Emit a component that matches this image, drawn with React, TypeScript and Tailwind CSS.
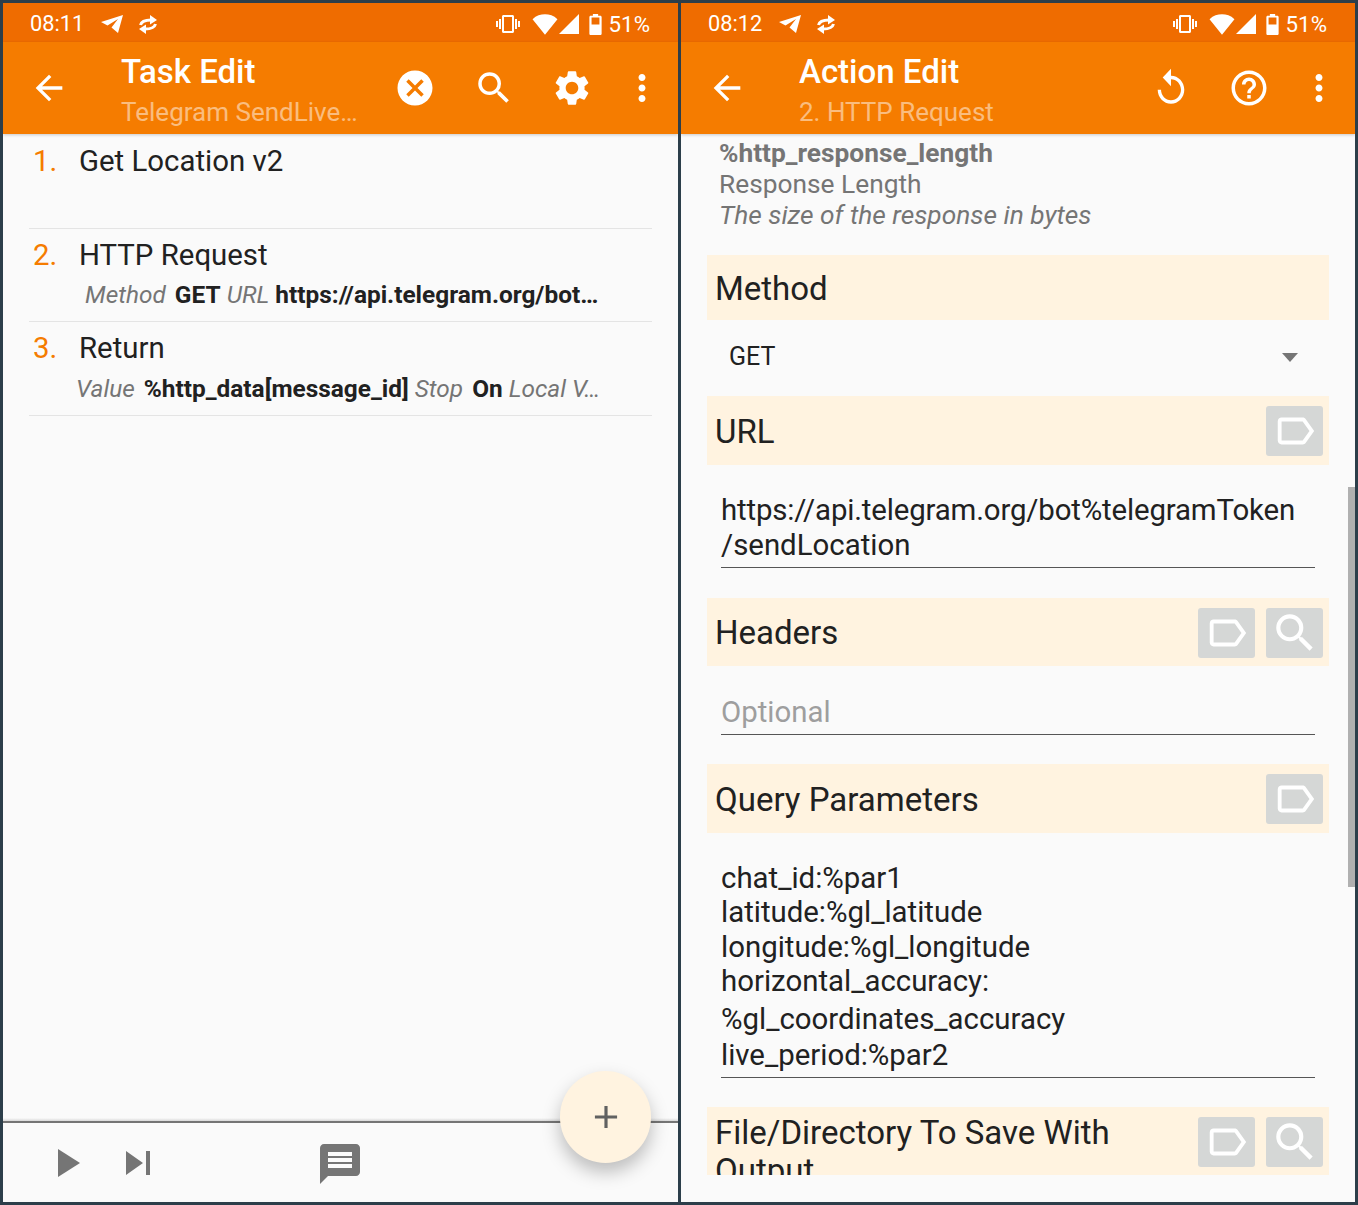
import {
  MdAdd,
  MdArrowBack,
  MdCancel,
  MdHelpOutline,
  MdLabelOutline,
  MdMessage,
  MdMoreVert,
  MdPlayArrow,
  MdReplay,
  MdSearch,
  MdSettings,
  MdSkipNext,
  MdVibration,
} from 'react-icons/md'

const font = { fontFamily: 'Roboto, sans-serif' }

function StatusBar({ time }: { time: string }) {
  return (
    <div className="flex h-[39px] shrink-0 items-center bg-[#ef6c00] pl-[27px] pr-[28px] pt-[3px] text-white">
      <span className="w-[56px] text-[21.800px] leading-none">{time}</span>
      {/* telegram plane */}
      <svg viewBox="0 0 22 18" className="ml-[15px] h-[18px] w-[22px]" fill="currentColor">
        <path d="M0 7 22 0 17 18 10.500 12.500 17 4 6.500 10.500z" />
      </svg>
      {/* sync arrows */}
      <svg viewBox="0 0 20 20" className="ml-[15px] h-[21px] w-[20px]" fill="currentColor">
        <path d="M2.500 10.500C3.500 6.500 7.500 5.500 13 5.500" fill="none" stroke="currentColor" strokeWidth="3" />
        <path d="M12 0.500 19 5.500 12 10z" />
        <path d="M17.500 9.500C16.500 13.500 12.500 14.500 7 14.500" fill="none" stroke="currentColor" strokeWidth="3" />
        <path d="M8 19.500 1 14.500 8 10z" />
      </svg>
      <div className="flex-1" />
      <MdVibration className="mr-[4px] h-[24px] w-[24px]" />
      <svg viewBox="0 0 24 24" className="ml-[8px] h-[26px] w-[26px]" fill="currentColor">
        <path d="M12 22 0.500 7.500C4 4.200 8 3 12 3s8 1.200 11.500 4.500L12 22zM4 8c2.300-1.500 5-2.300 8-2.300s5.700.8 8 2.300c-2.300-1.300-5-2-8-2s-5.700.7-8 2z" />
      </svg>
      <svg viewBox="0 0 20 20" className="ml-[1px] h-[20px] w-[20px]" fill="currentColor">
        <path d="M20 0v20H0z" />
      </svg>
      <svg viewBox="0 0 14 24" className="ml-[10px] h-[21px] w-[13px]" fill="currentColor">
        <path d="M4 0h6v2h2.500c.8 0 1.500.7 1.500 1.500V22.500c0 .8-.7 1.500-1.500 1.500h-11C.7 24 0 23.300 0 22.500V3.500C0 2.700.7 2 1.500 2H4zM2.500 4v8h9V4z" />
      </svg>
      <span className="ml-[7px] text-[22.300px] leading-none">51%</span>
    </div>
  )
}

function Toolbar({ title, sub, children }: { title: string; sub: string; children: React.ReactNode }) {
  return (
    <div className="relative z-10 flex h-[92px] shrink-0 items-center bg-[#f57c00] pl-[26px] text-white shadow-[0_1px_3px_rgba(0,0,0,0.2)]">
      <MdArrowBack className="h-[40px] w-[40px]" />
      <div className="ml-[52px] flex-1 pt-[5px]">
        <div className="text-[33px] font-medium leading-[38px]">{title}</div>
        <div className="mt-[5px] text-[26px] leading-[32px] text-white/50">{sub}</div>
      </div>
      {children}
    </div>
  )
}

function Row({ n, name, children }: { n: number; name: string; children?: React.ReactNode }) {
  return (
    <div className="h-[93.500px] border-b border-[#e4e4e4] first:h-[94.500px] first:pt-[1px]">
      <div className="flex h-[54px] items-center text-[29.400px] leading-none">
        <span className="w-[50px] pl-[4px] text-[#f57c00]">{n}.</span>
        <span className="text-[#212121]">{name}</span>
      </div>
      {children}
    </div>
  )
}

function Key({ children }: { children: React.ReactNode }) {
  return <span className="italic text-[#757575]">{children}</span>
}

function TaskEdit() {
  return (
    <div className="relative flex h-full w-[675px] flex-col overflow-hidden bg-[#fafafa]" style={font}>
      <StatusBar time="08:11" />
      <Toolbar title="Task Edit" sub="Telegram SendLive…">
        <div className="mr-[15px] flex items-center text-white">
          <MdCancel className="h-[42px] w-[42px]" />
          <MdSearch className="ml-[37px] h-[42px] w-[42px]" />
          <MdSettings className="ml-[36px] h-[42px] w-[42px]" />
          <MdMoreVert className="ml-[28px] h-[42px] w-[42px]" />
        </div>
      </Toolbar>
      <div className="ml-[26px] mr-[26px] flex-1">
        <Row n={1} name="Get Location v2" />
        <Row n={2} name="HTTP Request">
          <div className="-mt-[1px] whitespace-nowrap pl-[56px] text-[24.400px] leading-[26px] text-[#212121]">
            <Key>Method</Key> <b className="ml-[3px] font-bold">GET</b> <Key>URL</Key>{' '}
            <b className="font-bold">https://api.telegram.org/bot…</b>
          </div>
        </Row>
        <Row n={3} name="Return">
          <div className="whitespace-nowrap pl-[47px] text-[24.400px] leading-[26px] text-[#212121]">
            <Key>Value</Key> <b className="ml-[3px] font-bold">%http_data[message_id]</b> <Key>Stop</Key>{' '}
            <b className="ml-[3px] font-bold">On</b> <Key>Local V…</Key>
          </div>
        </Row>
      </div>
      <div className="h-[3px] bg-gradient-to-b from-transparent to-[#d8d8d8]" />
      <div className="flex h-[81px] shrink-0 items-center border-t-2 border-[#757575] text-[#757575]">
        <MdPlayArrow className="ml-[39px] h-[48px] w-[48px]" />
        <MdSkipNext className="ml-[24px] h-[48px] w-[48px]" />
        <MdMessage className="ml-[154px] mt-[2px] h-[48px] w-[48px]" />
      </div>
      <div className="absolute left-[557px] top-[1068px] flex h-[92px] w-[91px] items-center justify-center rounded-full bg-[#fff3e0] text-[#616161] shadow-[0_9px_18px_rgba(0,0,0,0.25)]">
        <MdAdd className="h-[38px] w-[38px]" />
      </div>
    </div>
  )
}

function IconBtn({ search }: { search?: boolean }) {
  return (
    <div className="flex h-[50px] w-[57px] items-center justify-center rounded-[3px] bg-[#d5d7d6] text-white">
      {search ? <MdSearch className="h-[50px] w-[50px]" /> : <MdLabelOutline className="h-[46px] w-[46px]" />}
    </div>
  )
}

function Section({ title, h, text, children }: { title: string; h: string; text: string; children?: React.ReactNode }) {
  return (
    <div className={`flex items-start overflow-hidden bg-[#fff3e0] pl-[8px] pr-[6px] ${h}`}>
      <div className={`flex-1 text-[33px] text-[#212121] ${text}`}>{title}</div>
      <div className="flex gap-[11px] pt-[10px]">{children}</div>
    </div>
  )
}

function ActionEdit() {
  return (
    <div className="relative flex h-full w-[674px] flex-col overflow-hidden bg-[#fafafa]" style={font}>
      <StatusBar time="08:12" />
      <Toolbar title="Action Edit" sub="2. HTTP Request">
        <div className="mr-[15px] flex items-center text-white">
          <MdReplay className="h-[42px] w-[42px] scale-x-[0.95]" />
          <MdHelpOutline className="ml-[36px] h-[42px] w-[42px]" />
          <MdMoreVert className="ml-[28px] h-[42px] w-[42px]" />
        </div>
      </Toolbar>
      <div className="mx-[26px] h-[1041px] overflow-hidden">
        <div className="pl-[12px] pt-[4px] text-[26.300px] leading-[31px] text-[#757575]">
          <div className="font-bold">%http_response_length</div>
          <div>Response Length</div>
          <div className="italic">The size of the response in bytes</div>
        </div>
        <div className="mt-[24px]">
          <Section title="Method" h="h-[65px]" text="pt-[17px] leading-[34.500px]" />
        </div>
        <div className="flex h-[76px] items-center justify-between pb-[2px] pl-[22px] pr-[31px]">
          <span className="text-[25px] text-[#212121]">GET</span>
          <span className="h-0 w-0 border-x-[8.500px] border-t-[9px] border-x-transparent border-t-[#757575]" />
        </div>
        <Section title="URL" h="h-[69px]" text="pt-[19px] leading-[34.500px]">
          <IconBtn />
        </Section>
        <div className="mx-[14px] mt-[28px] border-b border-[#555] pb-[5px] text-[29.400px] leading-[34.500px] text-[#212121]">
          <span className="tracking-[-0.15px]">https://api.telegram.org/bot%telegramToken</span>
          <br />
          /sendLocation
        </div>
        <div className="mt-[30px]">
          <Section title="Headers" h="h-[68px]" text="pt-[18px] leading-[34.500px]">
            <IconBtn />
            <IconBtn search />
          </Section>
        </div>
        <div className="mx-[14px] mt-[29px] border-b border-[#555] pb-[4px] text-[29.400px] leading-[34.500px] text-[#9e9e9e]">
          Optional
        </div>
        <div className="mt-[29px]">
          <Section title="Query Parameters" h="h-[69px]" text="pt-[19px] leading-[34.500px]">
            <IconBtn />
          </Section>
        </div>
        <div className="mx-[14px] mt-[28px] border-b border-[#555] pb-[4px] text-[29.400px] leading-[34.500px] text-[#212121]">
          <div>chat_id:%par1</div>
          <div>latitude:%gl_latitude</div>
          <div>longitude:%gl_longitude</div>
          <div>horizontal_accuracy:</div>
          <div className="mt-[3px]">%gl_coordinates_accuracy</div>
          <div className="mt-[2px]">live_period:%par2</div>
        </div>
        <div className="mt-[29px]">
          <Section title="File/Directory To Save With Output" h="h-[68px]" text="pt-[7px] leading-[38px]">
            <IconBtn />
            <IconBtn search />
          </Section>
        </div>
      </div>
      <div className="absolute right-0 top-[484px] h-[400px] w-[7px] bg-[#b0b0b0]" />
    </div>
  )
}

export default function App() {
  return (
    <div className="flex h-[1205px] w-[1358px] gap-[3px] bg-[#2c3e4a] p-[3px]">
      <TaskEdit />
      <ActionEdit />
    </div>
  )
}
